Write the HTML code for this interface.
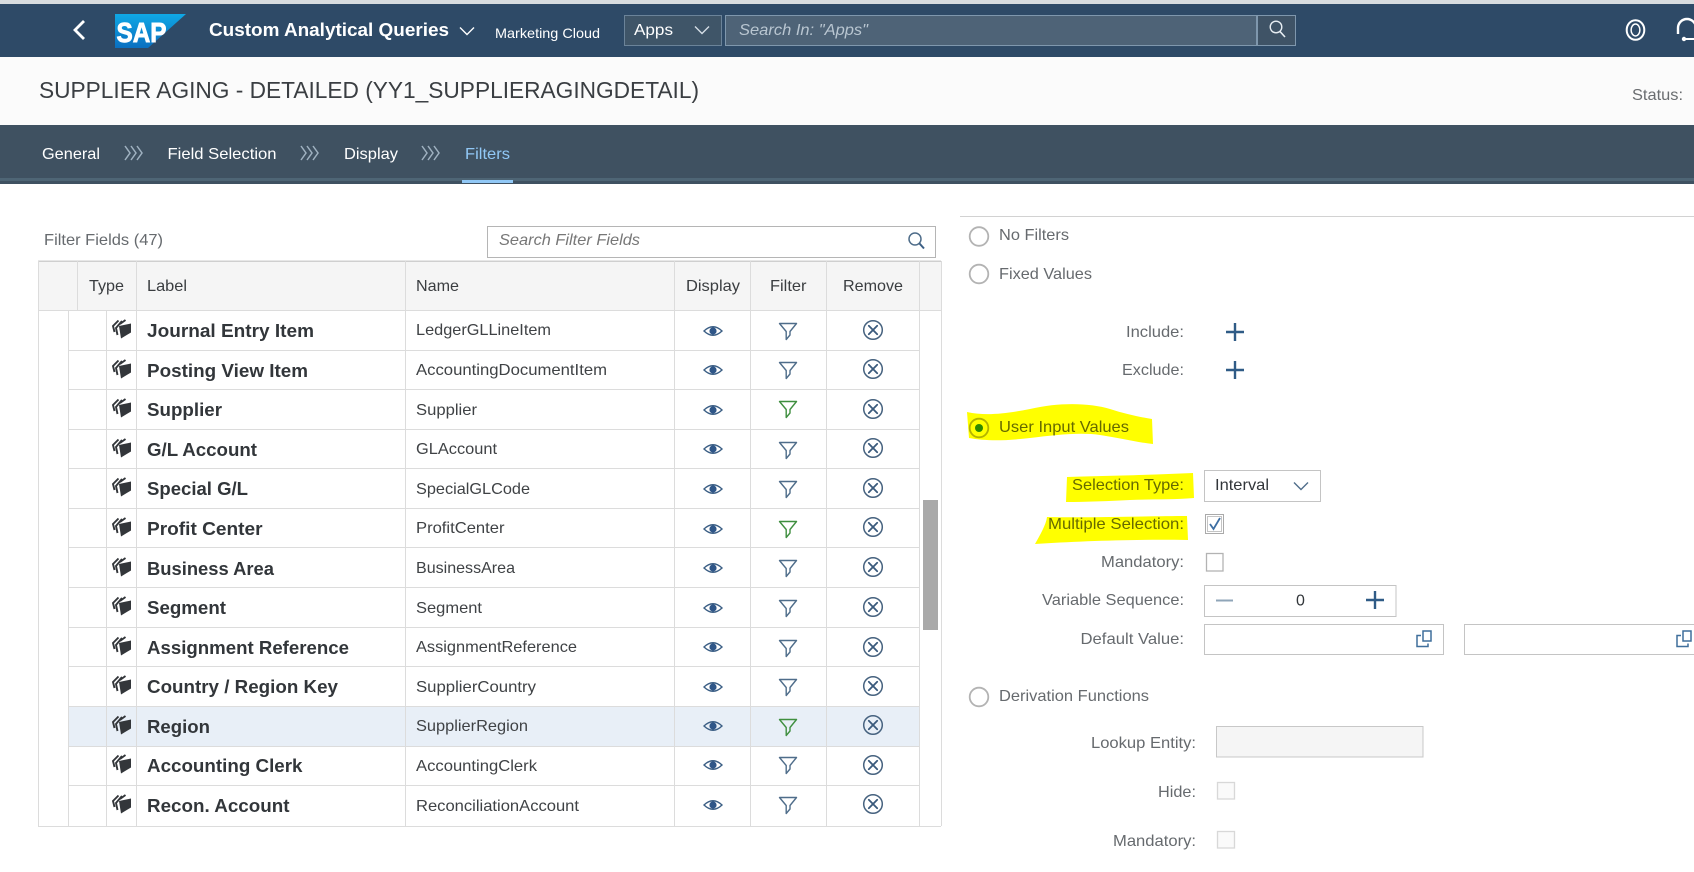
<!DOCTYPE html>
<html lang="en">
<head>
<meta charset="utf-8">
<title>Custom Analytical Queries</title>
<style>
html,body{margin:0;padding:0;background:#fff;width:1694px;height:872px;overflow:hidden}
svg{display:block}
text{font-family:"Liberation Sans",sans-serif;dominant-baseline:auto}
.h{font-size:16px;fill:#3a3d40}
.l{font-size:18.5px;font-weight:700;fill:#32363a}
.n{font-size:16px;fill:#3f4245;transform:translateY(-1px)}
.f{font-size:16px;fill:#666a6e;transform:translateY(-1px)}
.ln{stroke:#dcdcdc;stroke-width:1;shape-rendering:crispEdges}
</style>
</head>
<body>
<svg xmlns="http://www.w3.org/2000/svg" width="1694" height="872" viewBox="0 0 1694 872">
<defs>
  <linearGradient id="sap" x1="0" y1="0" x2="0" y2="1"><stop offset="0" stop-color="#0fa8e6"/><stop offset="1" stop-color="#0a6fc0"/></linearGradient>
  <g id="eye"><path d="M-9,-1 Q0,-9.500 9,-1 Q0,7.500 -9,-1Z" fill="none" stroke="#3c5f85" stroke-width="1.4"/><circle cy="-1" r="3.6" fill="#2f5688"/></g>
  <g id="fil"><path d="M-8.5,-7.5 H8.5 L2,0.5 V4 L-1.8,8.5 V0.5Z" fill="none" stroke="#4f6d8a" stroke-width="1.4" stroke-linejoin="round"/></g>
  <g id="filg"><path d="M-8.5,-7.5 H8.5 L2,0.5 V4 L-1.8,8.5 V0.5Z" fill="none" stroke="#3f8f3f" stroke-width="1.4" stroke-linejoin="round"/></g>
  <g id="rem"><circle r="9.3" fill="none" stroke="#46627f" stroke-width="1.5"/><path d="M-4.2,-4.2 L4.2,4.2 M4.2,-4.2 L-4.2,4.2" stroke="#3a5a7c" stroke-width="1.8" stroke-linecap="round"/></g>
  <g id="typ">
    <path d="M-3,-3 L9,-5.500 V3.500 L-1,9.500 Z" fill="#33363a"/>
    <path d="M-7.500,3 L-9,-3 L-3.500,-8.500 M-4.500,6 L-6,-1 L0,-8 M-2,-5 L3.500,-9" fill="none" stroke="#33363a" stroke-width="1.900"/>
  </g>
  <g id="plus"><path d="M-9,0 H9 M0,-9 V9" stroke="#2f5b86" stroke-width="2.4"/></g>
  <g id="cpy" fill="none" stroke="#3f6f9c" stroke-width="1.5"><rect x="-1" y="-8" width="8" height="10"/><path d="M-3,-3.5 H-7 V7.5 H4 V4.5"/></g>
  <g id="rad"><circle r="9.3" fill="#fff" stroke="#b3b3b3" stroke-width="1.8"/></g>
  <path id="chev" d="M-7,-3.5 L0,3.5 L7,-3.5" fill="none" stroke-width="1.4"/>
  <g id="tri" fill="none" stroke="#9fb1c0" stroke-width="1.5"><path d="M0,-7 L5,0 L0,7 M6,-7 L11,0 L6,7 M12,-7 L17,0 L12,7"/></g>
</defs>

<!-- shell -->
<rect width="1694" height="4" fill="#d8dcdf"/>
<rect y="4" width="1694" height="53" fill="#2e4a67"/>
<path d="M84,21 L75,30 L84,39" fill="none" stroke="#fff" stroke-width="2.8"/>
<path d="M115,14 H186 L148,48 H115Z" fill="url(#sap)"/>
<text x="116.500" y="42" font-size="28" font-weight="700" fill="#fff" stroke="#fff" stroke-width="0.9" textLength="50" lengthAdjust="spacingAndGlyphs">SAP</text>
<text x="209" y="36" font-size="18" font-weight="700" fill="#fff" textLength="240" lengthAdjust="spacingAndGlyphs">Custom Analytical Queries</text>
<use href="#chev" x="467" y="31" stroke="#fff"/>
<text x="495" y="38" font-size="14" fill="#fff" textLength="105" lengthAdjust="spacingAndGlyphs">Marketing Cloud</text>
<rect x="624.5" y="15.5" width="97" height="30" fill="#3f5568" stroke="#6b8399"/>
<text x="634" y="35" font-size="16" fill="#fff" textLength="39" lengthAdjust="spacingAndGlyphs">Apps</text>
<use href="#chev" x="702" y="30" stroke="#d5dee6"/>
<rect x="725.5" y="15.5" width="531" height="30" fill="#4e6377" stroke="#7f97ad"/>
<text x="739" y="35" font-size="16" font-style="italic" fill="#b9c6d1" textLength="129" lengthAdjust="spacingAndGlyphs">Search In: "Apps"</text>
<rect x="1257.5" y="15.5" width="38" height="30" fill="#3f5366" stroke="#7f97ad"/>
<circle cx="1276" cy="27" r="5.8" fill="none" stroke="#e8eef3" stroke-width="1.4"/>
<path d="M1280,31.5 L1285,37" stroke="#e8eef3" stroke-width="1.6"/>
<ellipse cx="1635.500" cy="30" rx="8.8" ry="9.8" fill="none" stroke="#fff" stroke-width="2"/>
<ellipse cx="1635.500" cy="30" rx="4.4" ry="6" fill="none" stroke="#fff" stroke-width="1.5"/>
<path d="M1678,34 V28 A9,9 0 0 1 1696,28" fill="none" stroke="#fff" stroke-width="2.4"/>
<path d="M1684,39 H1694" stroke="#fff" stroke-width="2"/><circle cx="1684" cy="39" r="2.2" fill="#fff"/>

<!-- title bar -->
<rect y="57" width="1694" height="68" fill="#fbfbfb"/>
<text x="39" y="98" font-size="23" fill="#3a3e42" textLength="660" lengthAdjust="spacingAndGlyphs">SUPPLIER AGING - DETAILED (YY1_SUPPLIERAGINGDETAIL)</text>
<text x="1632" y="100" font-size="16" fill="#6a6d70" textLength="51" lengthAdjust="spacingAndGlyphs">Status:</text>

<!-- nav -->
<rect y="125" width="1694" height="59" fill="#3f5161"/>
<rect y="178" width="1694" height="3" fill="#4e6575"/>
<rect x="462" y="180" width="51" height="3" fill="#91c8f6"/>
<text x="42" y="159" font-size="16" fill="#fff" textLength="58" lengthAdjust="spacingAndGlyphs">General</text>
<use href="#tri" x="125" y="153"/>
<text x="167.500" y="159" font-size="16" fill="#fff" textLength="109" lengthAdjust="spacingAndGlyphs">Field Selection</text>
<use href="#tri" x="301" y="153"/>
<text x="344" y="159" font-size="16" fill="#fff" textLength="54" lengthAdjust="spacingAndGlyphs">Display</text>
<use href="#tri" x="422" y="153"/>
<text x="465" y="159" font-size="16" fill="#91c8f6" textLength="45" lengthAdjust="spacingAndGlyphs">Filters</text>

<!-- filter fields heading -->
<text x="44" y="246" class="f" textLength="119" lengthAdjust="spacingAndGlyphs">Filter Fields (47)</text>
<rect x="487.500" y="226.500" width="448" height="31" fill="#fff" stroke="#b5b5b5"/>
<text x="499" y="245" font-size="16" font-style="italic" fill="#777" textLength="141" lengthAdjust="spacingAndGlyphs">Search Filter Fields</text>
<circle cx="915" cy="239" r="6" fill="none" stroke="#4f6d8a" stroke-width="1.5"/>
<path d="M919.500,243.500 L924,248.500" stroke="#3c5f85" stroke-width="2"/>

<!-- table -->
<rect x="38" y="261" width="903" height="49" fill="#f5f5f5"/>
<rect x="38" y="260.500" width="903" height="1.500" fill="#cfcfcf"/>
<rect x="68" y="706.500" width="852" height="40.500" fill="#e8eff7"/>
<g class="ln">
  <path d="M38.500,261 V826 M941.500,261 V826 M38,310.500 H941"/>
  <path d="M77.500,261 V310 M136.500,261 V310 M405.500,261 V310 M674.500,261 V310 M750.500,261 V310 M826.500,261 V310 M919.500,261 V310"/>
  <path d="M68.500,310 V826 M106.500,310 V826 M136.500,310 V826 M405.500,310 V826 M674.500,310 V826 M750.500,310 V826 M826.500,310 V826 M919.500,310 V826"/>
  <path d="M68,350.500 H920 M68,389.500 H920 M68,429.500 H920 M68,468.500 H920 M68,508.500 H920 M68,547.500 H920 M68,587.500 H920 M68,627.500 H920 M68,666.500 H920 M68,706.500 H920 M68,746.500 H920 M68,785.500 H920 M38,826.500 H941"/>
</g>
<rect x="923" y="500" width="15" height="130" fill="#a9a9a9"/>

<text x="89" y="291" class="h" textLength="35" lengthAdjust="spacingAndGlyphs">Type</text>
<text x="147" y="291" class="h" textLength="40" lengthAdjust="spacingAndGlyphs">Label</text>
<text x="416" y="291" class="h" textLength="43" lengthAdjust="spacingAndGlyphs">Name</text>
<text x="686" y="291" class="h" textLength="54" lengthAdjust="spacingAndGlyphs">Display</text>
<text x="770" y="291" class="h" textLength="36.500" lengthAdjust="spacingAndGlyphs">Filter</text>
<text x="843" y="291" class="h" textLength="60" lengthAdjust="spacingAndGlyphs">Remove</text>

<!-- rows -->
<g><use href="#typ" x="122" y="329"/><text x="147" y="337" class="l" textLength="167" lengthAdjust="spacingAndGlyphs">Journal Entry Item</text><text x="416" y="336" class="n" textLength="135" lengthAdjust="spacingAndGlyphs">LedgerGLLineItem</text><use href="#eye" x="713" y="332"/><use href="#fil" x="788" y="331"/><use href="#rem" x="873" y="330"/></g>
<g><use href="#typ" x="122" y="369"/><text x="147" y="377" class="l" textLength="161" lengthAdjust="spacingAndGlyphs">Posting View Item</text><text x="416" y="376" class="n" textLength="191" lengthAdjust="spacingAndGlyphs">AccountingDocumentItem</text><use href="#eye" x="713" y="371"/><use href="#fil" x="788" y="370"/><use href="#rem" x="873" y="369"/></g>
<g><use href="#typ" x="122" y="408"/><text x="147" y="416" class="l" textLength="75" lengthAdjust="spacingAndGlyphs">Supplier</text><text x="416" y="416" class="n" textLength="61" lengthAdjust="spacingAndGlyphs">Supplier</text><use href="#eye" x="713" y="411"/><use href="#filg" x="788" y="409"/><use href="#rem" x="873" y="409"/></g>
<g><use href="#typ" x="122" y="448"/><text x="147" y="456" class="l" textLength="110" lengthAdjust="spacingAndGlyphs">G/L Account</text><text x="416" y="455" class="n" textLength="81" lengthAdjust="spacingAndGlyphs">GLAccount</text><use href="#eye" x="713" y="450"/><use href="#fil" x="788" y="450"/><use href="#rem" x="873" y="448"/></g>
<g><use href="#typ" x="122" y="487"/><text x="147" y="495" class="l" textLength="101" lengthAdjust="spacingAndGlyphs">Special G/L</text><text x="416" y="495" class="n" textLength="114" lengthAdjust="spacingAndGlyphs">SpecialGLCode</text><use href="#eye" x="713" y="490"/><use href="#fil" x="788" y="489"/><use href="#rem" x="873" y="488"/></g>
<g><use href="#typ" x="122" y="527"/><text x="147" y="535" class="l" textLength="115.500" lengthAdjust="spacingAndGlyphs">Profit Center</text><text x="416" y="534" class="n" textLength="88.500" lengthAdjust="spacingAndGlyphs">ProfitCenter</text><use href="#eye" x="713" y="530"/><use href="#filg" x="788" y="529"/><use href="#rem" x="873" y="527"/></g>
<g><use href="#typ" x="122" y="567"/><text x="147" y="575" class="l" textLength="127" lengthAdjust="spacingAndGlyphs">Business Area</text><text x="416" y="574" class="n" textLength="99" lengthAdjust="spacingAndGlyphs">BusinessArea</text><use href="#eye" x="713" y="569"/><use href="#fil" x="788" y="568"/><use href="#rem" x="873" y="567"/></g>
<g><use href="#typ" x="122" y="606"/><text x="147" y="614" class="l" textLength="79" lengthAdjust="spacingAndGlyphs">Segment</text><text x="416" y="614" class="n" textLength="66" lengthAdjust="spacingAndGlyphs">Segment</text><use href="#eye" x="713" y="609"/><use href="#fil" x="788" y="608"/><use href="#rem" x="873" y="607"/></g>
<g><use href="#typ" x="122" y="646"/><text x="147" y="654" class="l" textLength="202" lengthAdjust="spacingAndGlyphs">Assignment Reference</text><text x="416" y="653" class="n" textLength="161" lengthAdjust="spacingAndGlyphs">AssignmentReference</text><use href="#eye" x="713" y="648"/><use href="#fil" x="788" y="648"/><use href="#rem" x="873" y="647"/></g>
<g><use href="#typ" x="122" y="685"/><text x="147" y="693" class="l" textLength="191" lengthAdjust="spacingAndGlyphs">Country / Region Key</text><text x="416" y="693" class="n" textLength="120" lengthAdjust="spacingAndGlyphs">SupplierCountry</text><use href="#eye" x="713" y="688"/><use href="#fil" x="788" y="687"/><use href="#rem" x="873" y="686"/></g>
<g><use href="#typ" x="122" y="725"/><text x="147" y="733" class="l" textLength="63" lengthAdjust="spacingAndGlyphs">Region</text><text x="416" y="732" class="n" textLength="112" lengthAdjust="spacingAndGlyphs">SupplierRegion</text><use href="#eye" x="713" y="727"/><use href="#filg" x="788" y="727"/><use href="#rem" x="873" y="725"/></g>
<g><use href="#typ" x="122" y="764"/><text x="147" y="772" class="l" textLength="155.500" lengthAdjust="spacingAndGlyphs">Accounting Clerk</text><text x="416" y="772" class="n" textLength="121" lengthAdjust="spacingAndGlyphs">AccountingClerk</text><use href="#eye" x="713" y="766"/><use href="#fil" x="788" y="765"/><use href="#rem" x="873" y="765"/></g>
<g><use href="#typ" x="122" y="804"/><text x="147" y="812" class="l" textLength="142.500" lengthAdjust="spacingAndGlyphs">Recon. Account</text><text x="416" y="812" class="n" textLength="163" lengthAdjust="spacingAndGlyphs">ReconciliationAccount</text><use href="#eye" x="713" y="806"/><use href="#fil" x="788" y="805"/><use href="#rem" x="873" y="804"/></g>

<!-- right panel -->
<rect x="960" y="216" width="734" height="1" fill="#d2d2d2"/>
<use href="#rad" x="979" y="236.500"/>
<text x="999" y="241" class="f" textLength="70" lengthAdjust="spacingAndGlyphs">No Filters</text>
<use href="#rad" x="979" y="274"/>
<text x="999" y="280" class="f" textLength="93" lengthAdjust="spacingAndGlyphs">Fixed Values</text>
<text x="1126" y="338" class="f" textLength="58" lengthAdjust="spacingAndGlyphs">Include:</text>
<use href="#plus" x="1235" y="332"/>
<text x="1122" y="376" class="f" textLength="62" lengthAdjust="spacingAndGlyphs">Exclude:</text>
<use href="#plus" x="1235" y="370"/>

<use href="#rad" x="979" y="428"/>
<circle cx="979" cy="428" r="4" fill="#2f8a12"/>
<text x="999" y="433" class="f" textLength="130" lengthAdjust="spacingAndGlyphs">User Input Values</text>

<text x="1072" y="491" class="f" textLength="112" lengthAdjust="spacingAndGlyphs">Selection Type:</text>
<rect x="1204.500" y="470.500" width="116" height="31" fill="#fff" stroke="#c4c4c4"/>
<text x="1215" y="490" font-size="16" fill="#32363a" textLength="54" lengthAdjust="spacingAndGlyphs">Interval</text>
<use href="#chev" x="1301" y="486" stroke="#4f6d8a"/>

<text x="1048" y="530" class="f" textLength="136" lengthAdjust="spacingAndGlyphs">Multiple Selection:</text>
<rect x="1205.500" y="514.500" width="18" height="19" fill="#fff" stroke="#555" stroke-dasharray="1 1"/>
<rect x="1207.500" y="516.500" width="14" height="15" fill="#fff" stroke="#c4c4c4"/>
<path d="M1210,524 L1213.500,529 L1220,518" fill="none" stroke="#3d6ea3" stroke-width="1.8"/>

<text x="1101" y="568" class="f" textLength="83" lengthAdjust="spacingAndGlyphs">Mandatory:</text>
<rect x="1206.500" y="553.500" width="16.500" height="17.500" fill="#fff" stroke="#b3b3b3" stroke-width="1.300"/>

<text x="1042" y="606" class="f" textLength="142" lengthAdjust="spacingAndGlyphs">Variable Sequence:</text>
<rect x="1204.500" y="585.500" width="191.500" height="31" fill="#fff" stroke="#c4c4c4"/>
<rect x="1216" y="599.500" width="17" height="2" fill="#8fa5b8"/>
<text x="1296" y="605.500" font-size="16" fill="#32363a">0</text>
<use href="#plus" x="1375" y="600"/>

<text x="1080.500" y="645" class="f" textLength="103.500" lengthAdjust="spacingAndGlyphs">Default Value:</text>
<rect x="1204.500" y="624.500" width="239" height="30" fill="#fff" stroke="#c4c4c4"/>
<use href="#cpy" x="1424" y="639"/>
<rect x="1464.500" y="624.500" width="240" height="30" fill="#fff" stroke="#c4c4c4"/>
<use href="#cpy" x="1684" y="639"/>

<use href="#rad" x="979" y="697"/>
<text x="999" y="702" class="f" textLength="150" lengthAdjust="spacingAndGlyphs">Derivation Functions</text>
<text x="1091" y="749" class="f" textLength="105" lengthAdjust="spacingAndGlyphs">Lookup Entity:</text>
<rect x="1216.500" y="726.500" width="206.500" height="30.500" fill="#f5f5f5" stroke="#c8c8c8"/>
<text x="1158" y="798" class="f" textLength="38" lengthAdjust="spacingAndGlyphs">Hide:</text>
<rect x="1217.500" y="782.500" width="17" height="16.500" fill="#fafafa" stroke="#d8d8d8" stroke-width="1.300"/>
<text x="1113" y="847" class="f" textLength="83" lengthAdjust="spacingAndGlyphs">Mandatory:</text>
<rect x="1217.500" y="831.500" width="17" height="16.500" fill="#fafafa" stroke="#d8d8d8" stroke-width="1.300"/>

<!-- highlighter marks -->
<g style="mix-blend-mode:multiply" fill="#ffff00">
  <path d="M967,412 C985,416 1005,414 1030,409 C1060,402 1090,403 1110,409 C1125,414 1140,417 1152,419 L1153,444 C1135,442 1120,438 1100,435 C1080,432 1055,435 1030,438 C1005,441 985,441 969,438 Z"/>
  <path d="M1067,477 C1100,476 1150,475 1193,473 L1194,498 C1170,500 1150,499 1130,500 C1110,501 1085,502 1066,502 Z"/>
  <path d="M1047,517 C1090,518 1150,516 1187,516 L1188,540 C1140,539 1080,541 1035,544 C1040,535 1046,525 1047,517 Z"/>
</g>
</svg>
</body>
</html>
